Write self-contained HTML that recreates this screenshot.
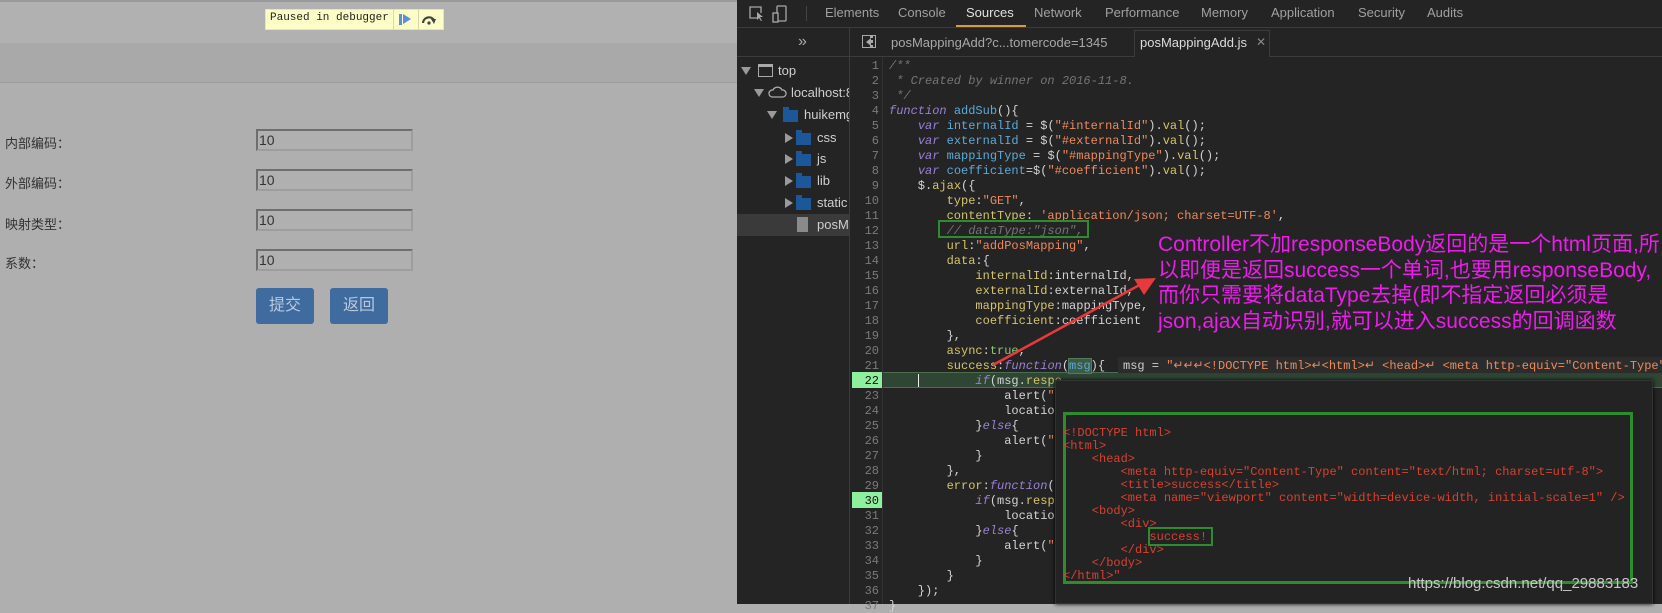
<!DOCTYPE html>
<html><head><meta charset="utf-8"><style>
*{margin:0;padding:0;box-sizing:border-box}
body{width:1662px;height:604px;overflow:hidden;position:relative;background:#afafaf;font-family:"Liberation Sans","Noto Sans CJK SC",sans-serif}
.a{position:absolute;white-space:pre}
.lbl{font-size:13px;color:#333}
.inp{position:absolute;left:256px;width:157px;height:22px;border:2px solid #6e6e6e;border-right-color:#9d9d9d;border-bottom-color:#9d9d9d;background:#b0b0b0;font-size:14px;color:#333;padding-left:1px;line-height:18px}
.btn{position:absolute;top:288px;height:36px;width:58px;background:#3f6b9e;border-radius:3px;color:#b9c8dc;font-size:16px;text-align:center;line-height:36px}
#dt{position:absolute;left:737px;top:0;width:925px;height:604px;background:#242424;color:#bdbdbd}
.tab{position:absolute;top:5px;font-size:13px;color:#a0a0a0}
.mono{font-family:"Liberation Mono",monospace;font-size:12px}
.ln{position:absolute;left:852px;width:27px;text-align:right;color:#7a7a7a;font-family:"Liberation Mono",monospace;font-size:12px}
.cl{position:absolute;left:889px;color:#d4d4d4;font-family:"Liberation Mono",monospace;font-size:12px;white-space:pre}
.c{color:#757575;font-style:italic}.k{color:#9a80d6;font-style:italic}.v{color:#5aaad8}.s{color:#ee8a5a}.y{color:#d6c46a}.g{color:#8bc77a}
.tr{position:absolute;font-size:13px;color:#cfcfcf}
.fold{position:absolute;width:15px;height:12px;background:#1b5799}
.fold:before{content:"";position:absolute;left:0;top:-3px;width:6px;height:3px;background:#1b5799}
.tri{position:absolute;width:0;height:0;border-left:5px solid transparent;border-right:5px solid transparent;border-top:8px solid #9a9a9a}
.tri2{position:absolute;width:0;height:0;border-top:5px solid transparent;border-bottom:5px solid transparent;border-left:8px solid #9a9a9a}
.mag{position:absolute;left:1158px;color:#ee1aee;font-size:21px;white-space:nowrap;font-family:"Liberation Sans","Noto Sans CJK SC",sans-serif;line-height:25px}
.pl{position:absolute;left:1063px;color:#d8412f;font-family:"Liberation Mono",monospace;font-size:12px;white-space:pre;line-height:13px}
</style></head><body>
<div class="a" style="left:0;top:0;width:737px;height:43px;background:#b1b1b1;border-top:2px solid #9a9a9a"></div>
<div class="a" style="left:0;top:43px;width:737px;height:40px;background:#a9a9a9;border-bottom:1px solid #9c9c9c"></div>
<div class="a" style="left:265px;top:9px;width:179px;height:21px;background:#fdfdc7;border:1px solid #e6e6b0"></div>
<div class="a mono" style="left:270px;top:12px;color:#222;font-size:11px">Paused in debugger</div>
<div class="a" style="left:393px;top:9px;width:1px;height:21px;background:#d8d8a8"></div>
<div class="a" style="left:418px;top:9px;width:1px;height:21px;background:#d8d8a8"></div>
<div class="a" style="left:399px;top:14px;width:3px;height:11px;background:#5a8ed8"></div>
<div class="a" style="left:403px;top:14px;border-top:5.5px solid transparent;border-bottom:5.5px solid transparent;border-left:8px solid #5a8ed8"></div>
<svg class="a" style="left:421px;top:13px" width="16" height="12"><path d="M2 10 A6 6 0 0 1 13 7" stroke="#444" stroke-width="2.2" fill="none"/><path d="M10 6 L15 6 L13 11Z" fill="#444"/><circle cx="8" cy="10" r="1.6" fill="#444"/></svg>
<div class="a lbl" style="left:5px;top:133px">内部编码：</div>
<div class="a lbl" style="left:5px;top:173px">外部编码：</div>
<div class="a lbl" style="left:5px;top:214px">映射类型：</div>
<div class="a lbl" style="left:5px;top:253px">系数：</div>
<div class="inp" style="top:129px">10</div>
<div class="inp" style="top:169px">10</div>
<div class="inp" style="top:209px">10</div>
<div class="inp" style="top:249px">10</div>
<div class="btn" style="left:256px">提交</div>
<div class="btn" style="left:330px">返回</div>

<div id="dt"></div>
<div class="a" style="left:737px;top:27px;width:925px;height:1px;background:#3c3c3c"></div>
<svg class="a" style="left:748px;top:5px" width="40" height="18"><path d="M9 13 H2 V2 H13 V8" stroke="#a8a8a8" stroke-width="1.3" fill="none"/><path d="M9 7 L15 12 L12 12 L14 16 L13 16 L11 13 L9 15Z" fill="#a8a8a8"/><rect x="29" y="1" width="9" height="15" rx="1" stroke="#a8a8a8" stroke-width="1.3" fill="none"/><rect x="25" y="8" width="5" height="9" stroke="#a8a8a8" stroke-width="1.3" fill="#242424"/></svg>
<div class="a" style="left:806px;top:6px;width:1px;height:15px;background:#444"></div>
<div class="tab" style="left:825px">Elements</div>
<div class="tab" style="left:898px">Console</div>
<div class="tab" style="left:966px;color:#e0e0e0">Sources</div>
<div class="a" style="left:956px;top:25px;width:70px;height:2px;background:#d99a3e"></div>
<div class="tab" style="left:1034px">Network</div>
<div class="tab" style="left:1105px">Performance</div>
<div class="tab" style="left:1201px">Memory</div>
<div class="tab" style="left:1271px">Application</div>
<div class="tab" style="left:1358px">Security</div>
<div class="tab" style="left:1427px">Audits</div>

<div class="a" style="left:737px;top:56px;width:925px;height:1px;background:#3c3c3c"></div>
<div class="a" style="left:849px;top:28px;width:1px;height:576px;background:#3c3c3c"></div>
<div class="a" style="left:798px;top:33px;font-size:16px;color:#aaa">»</div>
<div class="a" style="left:870px;top:35px;width:3px;height:3px;background:#aaa;box-shadow:0 5px 0 #aaa,0 10px 0 #aaa"></div>
<div class="a" style="left:862px;top:35px;width:14px;height:13px;border:1px solid #aaa"></div>
<div class="a" style="left:866px;top:38px;border-top:4px solid transparent;border-bottom:4px solid transparent;border-right:5px solid #aaa"></div>
<div class="a" style="left:891px;top:35px;font-size:13px;color:#a8a8a8">posMappingAdd?c...tomercode=1345</div>
<div class="a" style="left:1134px;top:30px;width:136px;height:27px;background:#242424;border:1px solid #3c3c3c;border-bottom:none"></div>
<div class="a" style="left:1140px;top:35px;font-size:13px;color:#dcdcdc">posMappingAdd.js</div>
<div class="a" style="left:1256px;top:35px;font-size:12px;color:#888">✕</div>

<div class="a" style="left:737px;top:214px;width:112px;height:22px;background:#3a3a3a"></div>
<div class="tri" style="left:741px;top:67px"></div>
<div class="a" style="left:758px;top:64px;width:15px;height:13px;border:1.5px solid #aaa;border-top-width:3px"></div>
<div class="tr" style="left:778px;top:63px">top</div>
<div class="tri" style="left:754px;top:89px"></div>
<svg class="a" style="left:767px;top:85px" width="20" height="14"><path d="M5 12 H16 A3.5 3.5 0 0 0 15 5 A5 5 0 0 0 6 5 A3.5 3.5 0 0 0 5 12Z" stroke="#aaa" stroke-width="1.3" fill="none"/></svg>
<div class="tr" style="left:791px;top:85px;width:58px;overflow:hidden">localhost:8</div>
<div class="tri" style="left:767px;top:111px"></div>
<div class="fold" style="left:783px;top:110px"></div>
<div class="tr" style="left:804px;top:107px;width:45px;overflow:hidden">huikemg</div>
<div class="tri2" style="left:785px;top:133px"></div><div class="fold" style="left:796px;top:133px"></div><div class="tr" style="left:817px;top:130px">css</div>
<div class="tri2" style="left:785px;top:154px"></div><div class="fold" style="left:796px;top:154px"></div><div class="tr" style="left:817px;top:151px">js</div>
<div class="tri2" style="left:785px;top:176px"></div><div class="fold" style="left:796px;top:176px"></div><div class="tr" style="left:817px;top:173px">lib</div>
<div class="tri2" style="left:785px;top:198px"></div><div class="fold" style="left:796px;top:198px"></div><div class="tr" style="left:817px;top:195px;width:32px;overflow:hidden">static</div>
<div class="a" style="left:797px;top:217px;width:11px;height:15px;background:#8a8a8a"></div>
<div class="tr" style="left:817px;top:217px;width:32px;overflow:hidden">posM</div>

<div class="a" style="left:882px;top:57px;width:1px;height:547px;background:#333"></div>
<div class="a" style="left:852px;top:372px;width:30px;height:16px;background:#8ef09e"></div>
<div class="a" style="left:852px;top:492px;width:30px;height:16px;background:#8ef09e"></div>
<div class="a" style="left:883px;top:372px;width:779px;height:16px;background:#2f4634;border-top:1px solid #4b6e51;border-bottom:1px solid #4b6e51"></div>
<div class="a" style="left:918px;top:374px;width:1px;height:13px;background:#eee"></div>

<div class="ln" style="top:59px">1</div><div class="ln" style="top:74px">2</div><div class="ln" style="top:89px">3</div><div class="ln" style="top:104px">4</div><div class="ln" style="top:119px">5</div><div class="ln" style="top:134px">6</div><div class="ln" style="top:149px">7</div><div class="ln" style="top:164px">8</div><div class="ln" style="top:179px">9</div><div class="ln" style="top:194px">10</div><div class="ln" style="top:209px">11</div><div class="ln" style="top:224px">12</div><div class="ln" style="top:239px">13</div><div class="ln" style="top:254px">14</div><div class="ln" style="top:269px">15</div><div class="ln" style="top:284px">16</div><div class="ln" style="top:299px">17</div><div class="ln" style="top:314px">18</div><div class="ln" style="top:329px">19</div><div class="ln" style="top:344px">20</div><div class="ln" style="top:359px">21</div><div class="ln" style="top:374px;color:#111">22</div><div class="ln" style="top:389px">23</div><div class="ln" style="top:404px">24</div><div class="ln" style="top:419px">25</div><div class="ln" style="top:434px">26</div><div class="ln" style="top:449px">27</div><div class="ln" style="top:464px">28</div><div class="ln" style="top:479px">29</div><div class="ln" style="top:494px;color:#111">30</div><div class="ln" style="top:509px">31</div><div class="ln" style="top:524px">32</div><div class="ln" style="top:539px">33</div><div class="ln" style="top:554px">34</div><div class="ln" style="top:569px">35</div><div class="ln" style="top:584px">36</div><div class="ln" style="top:599px">37</div>

<div class="cl" style="top:59px"><span class="c">/**</span></div>
<div class="cl" style="top:74px"><span class="c"> * Created by winner on 2016-11-8.</span></div>
<div class="cl" style="top:89px"><span class="c"> */</span></div>
<div class="cl" style="top:104px"><span class="k">function</span> <span class="v">addSub</span>(){</div>
<div class="cl" style="top:119px">    <span class="k">var</span> <span class="v">internalId</span> = $(<span class="s">"#internalId"</span>).<span class="y">val</span>();</div>
<div class="cl" style="top:134px">    <span class="k">var</span> <span class="v">externalId</span> = $(<span class="s">"#externalId"</span>).<span class="y">val</span>();</div>
<div class="cl" style="top:149px">    <span class="k">var</span> <span class="v">mappingType</span> = $(<span class="s">"#mappingType"</span>).<span class="y">val</span>();</div>
<div class="cl" style="top:164px">    <span class="k">var</span> <span class="v">coefficient</span>=$(<span class="s">"#coefficient"</span>).<span class="y">val</span>();</div>
<div class="cl" style="top:179px">    $.<span class="y">ajax</span>({</div>
<div class="cl" style="top:194px">        <span class="y">type</span>:<span class="s">"GET"</span>,</div>
<div class="cl" style="top:209px">        <span class="y">contentType</span>: <span class="s">'application/json; charset=UTF-8'</span>,</div>
<div class="cl" style="top:224px">        <span class="c">// dataType:"json",</span></div>
<div class="cl" style="top:239px">        <span class="y">url</span>:<span class="s">"addPosMapping"</span>,</div>
<div class="cl" style="top:254px">        <span class="y">data</span>:{</div>
<div class="cl" style="top:269px">            <span class="y">internalId</span>:internalId,</div>
<div class="cl" style="top:284px">            <span class="y">externalId</span>:externalId,</div>
<div class="cl" style="top:299px">            <span class="y">mappingType</span>:mappingType,</div>
<div class="cl" style="top:314px">            <span class="y">coefficient</span>:coefficient</div>
<div class="cl" style="top:329px">        },</div>
<div class="cl" style="top:344px">        <span class="y">async</span>:<span class="g">true</span>,</div>
<div class="cl" style="top:359px">        <span class="y">success</span>:<span class="k">function</span>(<span class="v" style="background:#3d5a44;outline:1px solid #557a5c">msg</span>){</div>
<div class="cl" style="top:374px">            <span class="k">if</span>(msg.<span class="y">respo</span></div>
<div class="cl" style="top:389px">                alert(<span class="s">" "</span></div>
<div class="cl" style="top:404px">                locatio</div>
<div class="cl" style="top:419px">            }<span class="k">else</span>{</div>
<div class="cl" style="top:434px">                alert(<span class="s">"</span></div>
<div class="cl" style="top:449px">            }</div>
<div class="cl" style="top:464px">        },</div>
<div class="cl" style="top:479px">        <span class="y">error</span>:<span class="k">function</span>(</div>
<div class="cl" style="top:494px">            <span class="k">if</span>(msg.<span class="y">resp</span></div>
<div class="cl" style="top:509px">                locatio</div>
<div class="cl" style="top:524px">            }<span class="k">else</span>{</div>
<div class="cl" style="top:539px">                alert(<span class="s">"</span></div>
<div class="cl" style="top:554px">            }</div>
<div class="cl" style="top:569px">        }</div>
<div class="cl" style="top:584px">    });</div>
<div class="cl" style="top:599px">}</div>

<div class="a" style="left:938px;top:220px;width:151px;height:18px;border:2px solid #2e8b2e"></div>

<div class="a" style="left:1118px;top:357px;width:544px;height:17px;background:#2c2c2c;border-bottom:1px solid #3a3a3a"></div>
<div class="a mono" style="left:1123px;top:358px;color:#cfcfcf">msg = <span style="color:#ee8a5a">"↵↵↵&lt;!DOCTYPE html&gt;↵&lt;html&gt;↵ &lt;head&gt;↵ &lt;meta http-equiv="Content-Type"</span></div>
<div class="a" style="left:1055px;top:380px;width:598px;height:224px;background:#232323;border:1px solid #333;box-shadow:0 0 4px #000"></div>
<div class="a" style="left:1063px;top:412px;width:570px;height:172px;border:3px solid #2e8b2e"></div>
<div class="pl" style="top:427px">&lt;!DOCTYPE html&gt;
&lt;html&gt;
    &lt;head&gt;
        &lt;meta http-equiv="Content-Type" content="text/html; charset=utf-8"&gt;
        &lt;title&gt;success&lt;/title&gt;
        &lt;meta name="viewport" content="width=device-width, initial-scale=1" /&gt;
    &lt;body&gt;
        &lt;div&gt;
            success!
        &lt;/div&gt;
    &lt;/body&gt;
&lt;/html&gt;"</div>
<div class="a" style="left:1148px;top:527px;width:65px;height:19px;border:2px solid #2e8b2e"></div>

<div class="mag" style="top:232px">Controller不加responseBody返回的是一个html页面,所</div>
<div class="mag" style="top:258px">以即便是返回success一个单词,也要用responseBody,</div>
<div class="mag" style="top:283px">而你只需要将dataType去掉(即不指定返回必须是</div>
<div class="mag" style="top:309px">json,ajax自动识别,就可以进入success的回调函数</div>

<svg class="a" style="left:980px;top:270px" width="190" height="110"><line x1="13" y1="95" x2="165" y2="12" stroke="#e83a3a" stroke-width="2.5"/><path d="M176 8 L154 9 L164 25Z" fill="#e83a3a"/></svg>

<div class="a" style="left:1408px;top:575px;font-size:15px;color:#c8c8c8">https://blog.csdn.net/qq_29883183</div>
</body></html>
